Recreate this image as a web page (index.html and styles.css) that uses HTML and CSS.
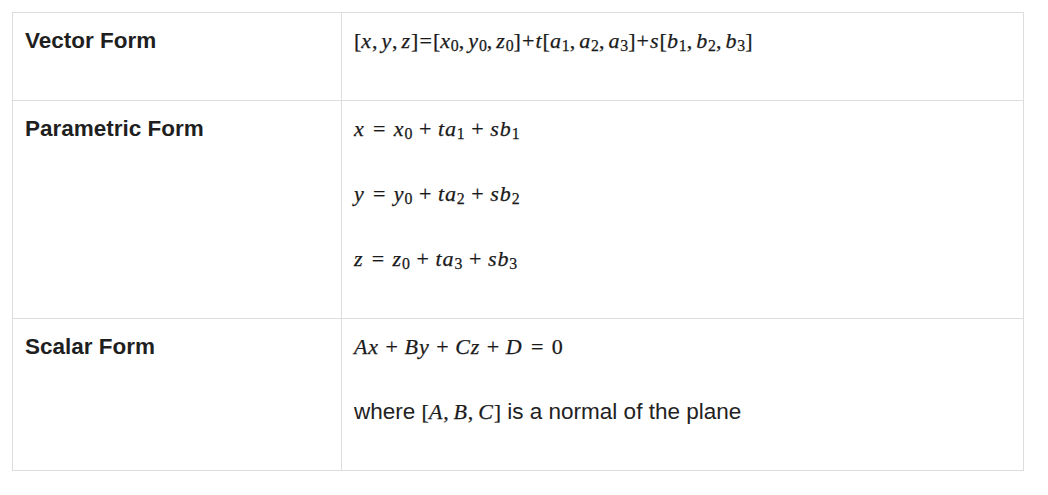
FILE: index.html
```html
<!DOCTYPE html>
<html lang="en">
<head>
<meta charset="utf-8">
<title>Forms of a Plane</title>
<link rel="stylesheet" href="styles.css">
</head>
<body>
<table class="forms">
  <tr>
    <th class="label">Vector Form</th>
    <td class="content">
      <p class="line"><span class="math"><span class="br">[</span><i>x</i><span class="cm">,</span><i>y</i><span class="cm">,</span><i>z</i><span class="br">]</span><span class="op-tight">=</span><span class="br">[</span><i>x</i><sub>0</sub><span class="cm">,</span><i>y</i><sub>0</sub><span class="cm">,</span><i>z</i><sub>0</sub><span class="br">]</span><span class="op-tight">+</span><i>t</i><span class="br">[</span><i>a</i><sub>1</sub><span class="cm">,</span><i>a</i><sub>2</sub><span class="cm">,</span><i>a</i><sub>3</sub><span class="br">]</span><span class="op-tight">+</span><i>s</i><span class="br">[</span><i>b</i><sub>1</sub><span class="cm">,</span><i>b</i><sub>2</sub><span class="cm">,</span><i>b</i><sub>3</sub><span class="br">]</span></span></p>
    </td>
  </tr>
  <tr>
    <th class="label">Parametric Form</th>
    <td class="content">
      <p class="line"><span class="math"><i>x</i><span class="rel">=</span><i>x</i><sub>0</sub><span class="bin">+</span><i>t</i><i>a</i><sub>1</sub><span class="bin">+</span><i>s</i><i>b</i><sub>1</sub></span></p>
      <p class="line"><span class="math"><i>y</i><span class="rel">=</span><i>y</i><sub>0</sub><span class="bin">+</span><i>t</i><i>a</i><sub>2</sub><span class="bin">+</span><i>s</i><i>b</i><sub>2</sub></span></p>
      <p class="line"><span class="math"><i>z</i><span class="rel">=</span><i>z</i><sub>0</sub><span class="bin">+</span><i>t</i><i>a</i><sub>3</sub><span class="bin">+</span><i>s</i><i>b</i><sub>3</sub></span></p>
    </td>
  </tr>
  <tr>
    <th class="label">Scalar Form</th>
    <td class="content">
      <p class="line"><span class="math"><i>A</i><i>x</i><span class="bin">+</span><i>B</i><i>y</i><span class="bin">+</span><i>C</i><i>z</i><span class="bin">+</span><i>D</i><span class="rel">=</span>0</span></p>
      <p class="line line-text">where <span class="math"><span class="br">[</span><i>A</i><span class="cm-tight">,</span><i>B</i><span class="cm-tight">,</span><i>C</i><span class="br">]</span></span> is a normal of the plane</p>
    </td>
  </tr>
</table>
</body>
</html>
```
FILE: styles.css
```css
body {
  margin: 12px;
  background: #ffffff;
  color: #222222;
  font-family: "Liberation Sans", Arial, sans-serif;
}

.forms {
  border-collapse: collapse;
  width: 1012px;
}

.forms th,
.forms td {
  border: 1px solid #dddddd;
  vertical-align: top;
  text-align: left;
  padding: 15px 12px 7px;
}

.label {
  width: 304px;
  font-size: 22.5px;
  font-weight: bold;
  line-height: 25px;
  color: #1f1f1f;
}

.line {
  margin: 0 0 40px;
  font-size: 22px;
  line-height: 25px;
  color: #222222;
}

.line-text {
  font-size: 22.5px;
  margin-bottom: 39px;
}

.math {
  font-family: "Liberation Serif", "Times New Roman", serif;
  font-size: 22px;
  white-space: nowrap;
  color: #1a1a1a;
  -webkit-text-stroke: 0.25px #1a1a1a;
}

.math i {
  font-style: italic;
  padding-right: 0.04em;
}

.math sub {
  font-size: 0.72em;
  line-height: 0;
  vertical-align: -0.22em;
  font-style: normal;
}

.br {
  font-style: normal;
}

.cm {
  margin-right: 0.18em;
}

.cm-tight {
  margin-right: 0.22em;
}

.op-tight {
  margin: 0 0.05em;
}

.rel {
  margin: 0 0.38em;
}

.bin {
  margin: 0 0.3em;
}
```
